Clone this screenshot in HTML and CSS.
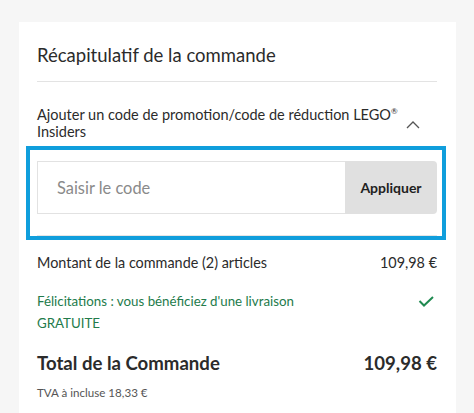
FILE: index.html
```html
<!DOCTYPE html>
<html lang="fr">

<head>
  <meta charset="UTF-8">
  <meta name="viewport" content="width=device-width, initial-scale=1.0">
  <title>Récapitulatif de la commande</title>
  <link rel="stylesheet" href="styles.css">
</head>

<body>

  <!-- order summary card -->
  <div class="summary-card">
    <h2 class="summary-title">Récapitulatif de la commande</h2>

    <!-- promo code toggle -->
    <div class="promo-header">
      <span class="promo-label">Ajouter un code de promotion/code de réduction LEGO<sup>®</sup> Insiders</span>
      <svg class="chevron" width="14" height="9" viewBox="0 0 14 9">
        <polyline points="1,8 7,2 13,8" fill="none" stroke="#555" stroke-width="1.3" />
      </svg>
    </div>

    <!-- promo code form (focused) -->
    <div class="promo-box">
      <div class="promo-form">
        <input type="text" class="promo-input" placeholder="Saisir le code">
        <button class="promo-btn">Appliquer</button>
      </div>
    </div>

    <!-- totals -->
    <div class="summary-row">
      <span>Montant de la commande (2) articles</span>
      <span>109,98 €</span>
    </div>

    <div class="summary-row shipping">
      <span class="shipping-text">Félicitations : vous bénéficiez d'une livraison<br>GRATUITE</span>
      <svg class="check" width="16" height="11" viewBox="0 0 16 11">
        <polyline points="1.5,5 6,9.5 15,1" fill="none" stroke="#1f8a50" stroke-width="2" />
      </svg>
    </div>

    <div class="summary-row total">
      <span>Total de la Commande</span>
      <span>109,98 €</span>
    </div>

    <p class="tax-note">TVA à incluse 18,33 €</p>
  </div>

</body>

</html>
```

FILE: styles.css
```css
/* page */
body {
  margin: 0;
  padding: 0;
  background-color: #f6f6f6;
  font-family: Lato, "Open Sans", Arial, sans-serif;
  color: #2b2b2b;
}

/* card */
.summary-card {
  width: 400px;
  margin: 22px 0 0 19px;
  padding: 0 19px 20px 18px;
  background-color: white;
}

.summary-title {
  margin: 0;
  padding: 21px 0 14px;
  font-size: 18.5px;
  font-weight: 400;
  line-height: 24px;
  border-bottom: 1px solid #e3e3e3;
}

/* promo code */
.promo-header {
  display: flex;
  align-items: center;
  justify-content: space-between;
  margin-top: 24px;
}

.promo-label {
  width: 365px;
  font-size: 14.5px;
  line-height: 17px;
}

.promo-label sup {
  font-size: 8px;
  line-height: 0;
}

.chevron {
  margin-right: 17px;
  margin-top: 2px;
}

.promo-box {
  margin: 6px -9px 0 -11px;
  border: 4px solid #109edc;
  padding: 11px 5px 0 7px;
}

.promo-form {
  display: flex;
  padding-bottom: 21px;
  border-bottom: 1px solid #e6e6e6;
}

.promo-input {
  flex: 1;
  height: 53px;
  box-sizing: border-box;
  border: 1px solid #e2e2e2;
  border-right: none;
  padding: 0 19px;
  font-family: inherit;
  font-size: 16.4px;
  color: #333;
  outline: none;
}

.promo-input::placeholder {
  color: #8a8a8a;
}

.promo-btn {
  width: 92px;
  height: 53px;
  border: none;
  border-radius: 0 4px 4px 0;
  background-color: #e0e0e0;
  font-family: inherit;
  font-size: 14px;
  font-weight: 700;
  color: #222;
}

/* totals */
.summary-row {
  display: flex;
  justify-content: space-between;
  align-items: flex-start;
  margin-top: 13px;
  font-size: 14.4px;
  line-height: 20px;
}

.shipping {
  margin-top: 17px;
  font-size: 13.3px;
  color: #237b4b;
  line-height: 22px;
}

.check {
  margin: 6px 3px 0 0;
}

.total {
  margin-top: 17px;
  font-size: 18.6px;
  font-weight: 700;
  line-height: 24px;
}

.tax-note {
  margin: 10px 0 0;
  font-size: 11.6px;
  line-height: 16px;
  color: #555;
}
```
